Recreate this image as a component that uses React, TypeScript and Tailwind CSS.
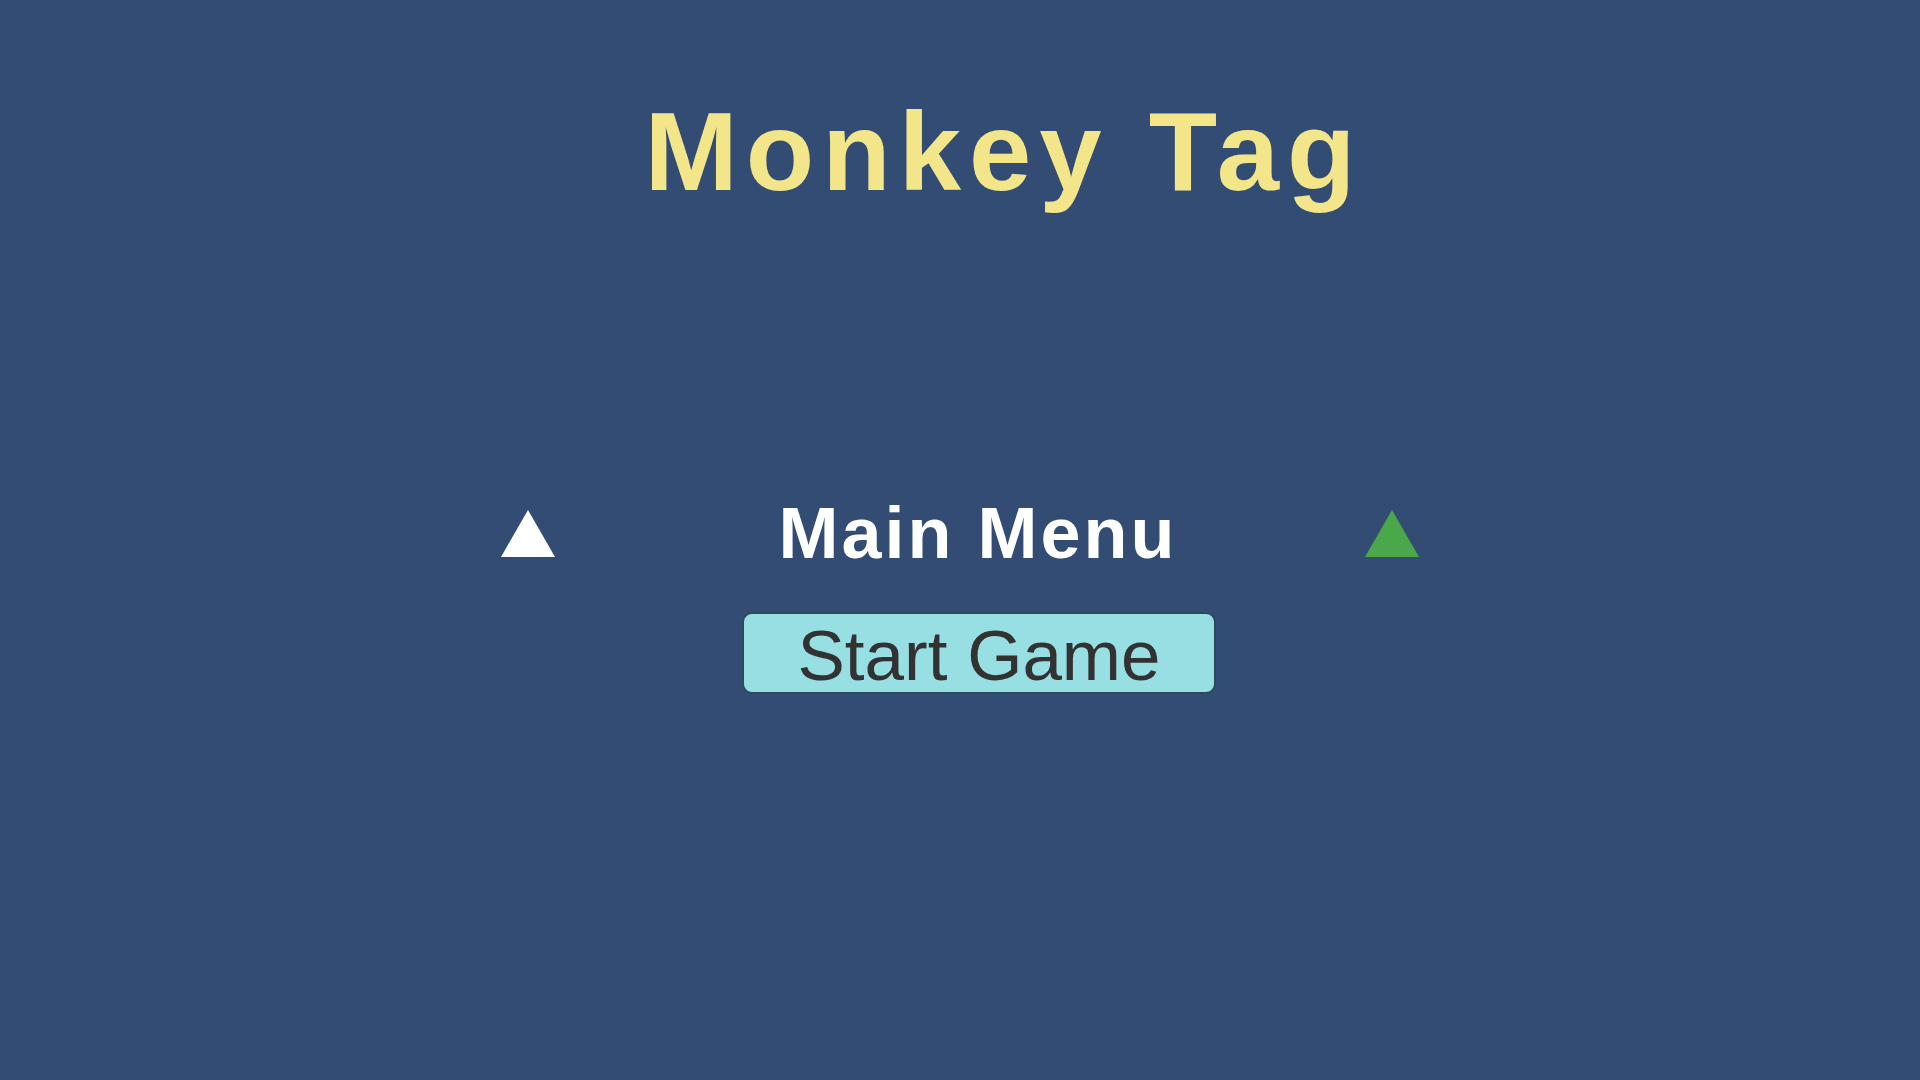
export default function App() {
  return (
    <div className="w-full h-screen bg-[#324c74] flex flex-col items-center overflow-hidden">
      {/* Game title */}
      <h1
        className="mt-[96px] ml-[88px] text-[112px] leading-none font-bold tracking-[8px] text-[#f3e68a]"
        style={{ fontFamily: '"Liberation Sans", Arial, sans-serif' }}
      >
        Monkey Tag
      </h1>

      {/* Menu header with the two player markers */}
      <div className="mt-[289px] w-[918px] flex items-center justify-between">
        <Triangle className="fill-white" />
        <h2
          className="ml-[36px] text-[72px] leading-none font-bold tracking-[3px] text-white"
          style={{ fontFamily: '"Liberation Sans", Arial, sans-serif' }}
        >
          Main Menu
        </h2>
        <Triangle className="fill-[#4aa84a]" />
      </div>

      <button
        className="mt-[43px] ml-[38px] w-[474px] h-[82px] pt-[4px] rounded-[10px] border-2 border-[#2b4a5c] bg-[#97dfe3] text-[71px] leading-none text-[#323232] flex items-center justify-center"
        style={{ fontFamily: '"Liberation Sans", Arial, sans-serif' }}
      >
        Start Game
      </button>
    </div>
  );
}

function Triangle({ className }: { className: string }) {
  return (
    <svg width="54" height="47" viewBox="0 0 54 47" className={className}>
      <polygon points="27,0 54,47 0,47" />
    </svg>
  );
}
